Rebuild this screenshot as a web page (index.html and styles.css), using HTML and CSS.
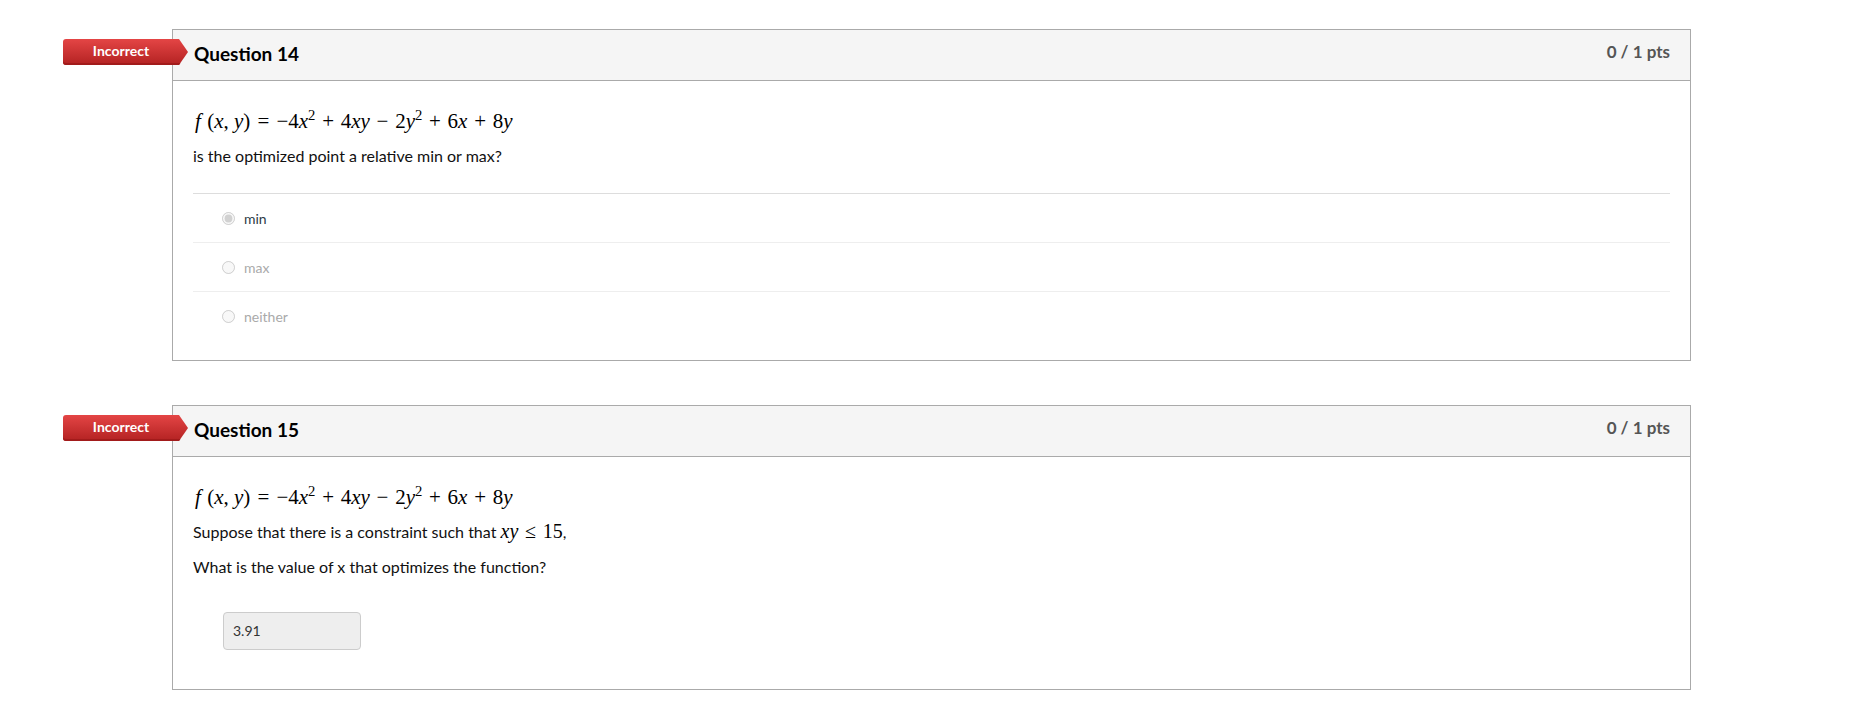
FILE: index.html
```html
<!DOCTYPE html>
<html lang="en">
<head>
<meta charset="utf-8">
<title>Quiz results</title>
<link rel="stylesheet" href="styles.css">
</head>
<body>
<div class="quiz">
  <div class="question">
    <div class="badge">Incorrect</div>
    <div class="q-header">
      <span class="q-name">Question 14</span>
      <span class="q-pts">0 / 1 pts</span>
    </div>
    <div class="q-body">
      <div class="math-line"><span class="mi">f</span><span class="fsp"></span>(<span class="mi">x</span>,<span class="csp"></span><span class="mi">y</span>)<span class="rel">=</span>−4<span class="mi">x</span><sup class="sup">2</sup><span class="bin">+</span>4<span class="mi">x</span><span class="mi">y</span><span class="bin">−</span>2<span class="mi">y</span><sup class="sup">2</sup><span class="bin">+</span>6<span class="mi">x</span><span class="bin">+</span>8<span class="mi">y</span></div>
      <p class="q-text">is the optimized point a relative min or max?</p>
      <div class="answers">
        <label class="answer selected"><input type="radio" disabled checked><span>min</span></label>
        <label class="answer"><input type="radio" disabled><span>max</span></label>
        <label class="answer"><input type="radio" disabled><span>neither</span></label>
      </div>
    </div>
  </div>

  <div class="question">
    <div class="badge">Incorrect</div>
    <div class="q-header">
      <span class="q-name">Question 15</span>
      <span class="q-pts">0 / 1 pts</span>
    </div>
    <div class="q-body">
      <div class="math-line"><span class="mi">f</span><span class="fsp"></span>(<span class="mi">x</span>,<span class="csp"></span><span class="mi">y</span>)<span class="rel">=</span>−4<span class="mi">x</span><sup class="sup">2</sup><span class="bin">+</span>4<span class="mi">x</span><span class="mi">y</span><span class="bin">−</span>2<span class="mi">y</span><sup class="sup">2</sup><span class="bin">+</span>6<span class="mi">x</span><span class="bin">+</span>8<span class="mi">y</span></div>
      <p class="q-text">Suppose that there is a constraint such that <span class="math-inline"><span class="mi">x</span><span class="mi">y</span><span class="rel">≤</span>15</span>,</p>
      <p class="q-text">What is the value of x that optimizes the function?</p>
      <div class="numeric">
        <div class="num-input">3.91</div>
      </div>
    </div>
  </div>
</div>
</body>
</html>
```

FILE: styles.css
```css
html, body {
  margin: 0;
  padding: 0;
  background: #ffffff;
}

body {
  font-family: Lato, "Liberation Sans", sans-serif;
  color: #2d3b45;
}

.quiz {
  display: flex;
  flex-direction: column;
  gap: 44px;
  padding: 29px 0 0 172px;
}

.question {
  position: relative;
  box-sizing: border-box;
  width: 1519px;
  border: 1px solid #aaaaaa;
  background: #ffffff;
}

.badge {
  position: absolute;
  left: -110px;
  top: 9px;
  width: 125px;
  height: 26px;
  box-sizing: border-box;
  padding-right: 9px;
  border-radius: 3px 0 0 3px;
  background: linear-gradient(#e44545, #b32222);
  clip-path: polygon(0 0, 116px 0, 125px 13px, 116px 26px, 0 26px);
  color: #ffffff;
  font-weight: bold;
  font-size: 14px;
  line-height: 24px;
  text-align: center;
  box-shadow: inset 0 -2px 0 #a21b1b;
}

.q-header {
  box-sizing: border-box;
  height: 51px;
  background: #f5f5f5;
  border-bottom: 1px solid #aaaaaa;
  display: flex;
  align-items: flex-start;
  justify-content: space-between;
  padding: 12px 20px 0 21px;
}

.q-name {
  font-size: 19px;
  font-weight: bold;
  color: #000000;
  line-height: 24px;
}

.q-pts {
  font-size: 17px;
  font-weight: bold;
  color: #555555;
  line-height: 20px;
}

.q-body {
  padding: 28px 20px 20px 20px;
}

.math-line,
.math-inline {
  font-family: "Liberation Serif", "DejaVu Serif", serif;
  color: #000000;
}

.math-line {
  font-size: 21px;
  line-height: 24px;
  margin: 0 0 11px 2px;
}

.math-inline {
  font-size: 20px;
  line-height: 1;
}

.mi {
  font-style: italic;
}

.fsp {
  display: inline-block;
  width: 0.3em;
}

.csp {
  display: inline-block;
  width: 0.25em;
}

.rel {
  margin: 0 0.34em;
}

.bin {
  margin: 0 0.32em;
}

.sup {
  font-size: 0.7em;
  line-height: 0;
  vertical-align: 0.55em;
}

.q-text {
  margin: 0 0 11px 0;
  font-size: 16px;
  line-height: 24px;
  color: #111111;
}

.answers {
  margin-top: 25px;
  border-top: 1px solid #dddddd;
}

.answer {
  display: flex;
  align-items: center;
  gap: 9px;
  height: 48px;
  padding-left: 29px;
  font-size: 14px;
  color: #aaaaaa;
  border-top: 1px solid #eeeeee;
}

.answer:first-child {
  border-top: none;
}

.answer input {
  margin: 0;
  width: 13px;
  height: 13px;
}

.answer.selected {
  color: #2d3b45;
}

.numeric {
  padding: 22px 0 19px 30px;
}

.num-input {
  box-sizing: border-box;
  width: 138px;
  height: 38px;
  padding: 0 9px;
  background: #eeeeee;
  border: 1px solid #cccccc;
  border-radius: 4px;
  font-size: 14px;
  line-height: 36px;
  color: #333333;
}
```
